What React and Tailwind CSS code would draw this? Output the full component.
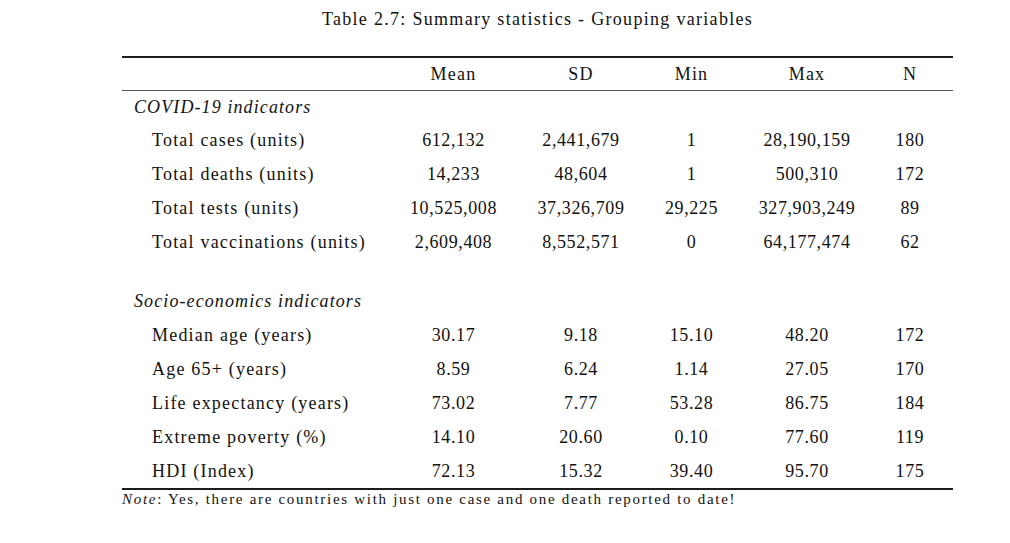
import React from 'react';

const covidRows = [
  ['Total cases (units)', '612,132', '2,441,679', '1', '28,190,159', '180'],
  ['Total deaths (units)', '14,233', '48,604', '1', '500,310', '172'],
  ['Total tests (units)', '10,525,008', '37,326,709', '29,225', '327,903,249', '89'],
  ['Total vaccinations (units)', '2,609,408', '8,552,571', '0', '64,177,474', '62'],
];

const socioRows = [
  ['Median age (years)', '30.17', '9.18', '15.10', '48.20', '172'],
  ['Age 65+ (years)', '8.59', '6.24', '1.14', '27.05', '170'],
  ['Life expectancy (years)', '73.02', '7.77', '53.28', '86.75', '184'],
  ['Extreme poverty (%)', '14.10', '20.60', '0.10', '77.60', '119'],
  ['HDI (Index)', '72.13', '15.32', '39.40', '95.70', '175'],
];

const grid = 'grid grid-cols-[268px_127px_128px_93px_138px_68px]';

function DataRow({ row }) {
  const [label, ...values] = row;
  return (
    <div className={`${grid} h-[34px] items-center`}>
      <span className="pl-[30px] tracking-[1.2px] whitespace-nowrap">{label}</span>
      {values.map((v, i) => (
        <span key={i} className="text-center tracking-[0.6px]">
          {v}
        </span>
      ))}
    </div>
  );
}

function GroupTitle({ children, className }) {
  return (
    <div className={`flex items-center pl-[12px] italic tracking-[1.1px] ${className}`}>
      {children}
    </div>
  );
}

export default function App() {
  return (
    <div
      className="w-[1010px] h-[543px] bg-white text-[#111] overflow-hidden"
      style={{ fontFamily: '"Liberation Serif", "Times New Roman", serif' }}
    >
      <div className="ml-[122px] w-[831px] text-[18px] leading-[20px]">
        <div className="pt-[9px] h-[56px] text-center tracking-[1.3px]">
          Table 2.7: Summary statistics - Grouping variables
        </div>

        <div className="h-[2px] bg-[#1c1c1c]" />

        <div className={`${grid} h-[32px] items-center`}>
          <span />
          {['Mean', 'SD', 'Min', 'Max', 'N'].map((h) => (
            <span key={h} className="text-center tracking-[1.2px]">
              {h}
            </span>
          ))}
        </div>

        <div className="h-px bg-[#555]" />

        <GroupTitle className="h-[32px]">COVID-19 indicators</GroupTitle>
        {covidRows.map((r) => (
          <DataRow key={r[0]} row={r} />
        ))}

        <div className="h-[25px]" />

        <GroupTitle className="h-[34px]">Socio-economics indicators</GroupTitle>
        {socioRows.map((r) => (
          <DataRow key={r[0]} row={r} />
        ))}

        <div className="h-[2px] bg-[#1c1c1c]" />

        <div className="h-[18px] flex items-center text-[15px] tracking-[1.7px] whitespace-nowrap">
          <span className="italic">Note</span>: Yes, there are countries with just one case and one death reported to date!
        </div>
      </div>
    </div>
  );
}
